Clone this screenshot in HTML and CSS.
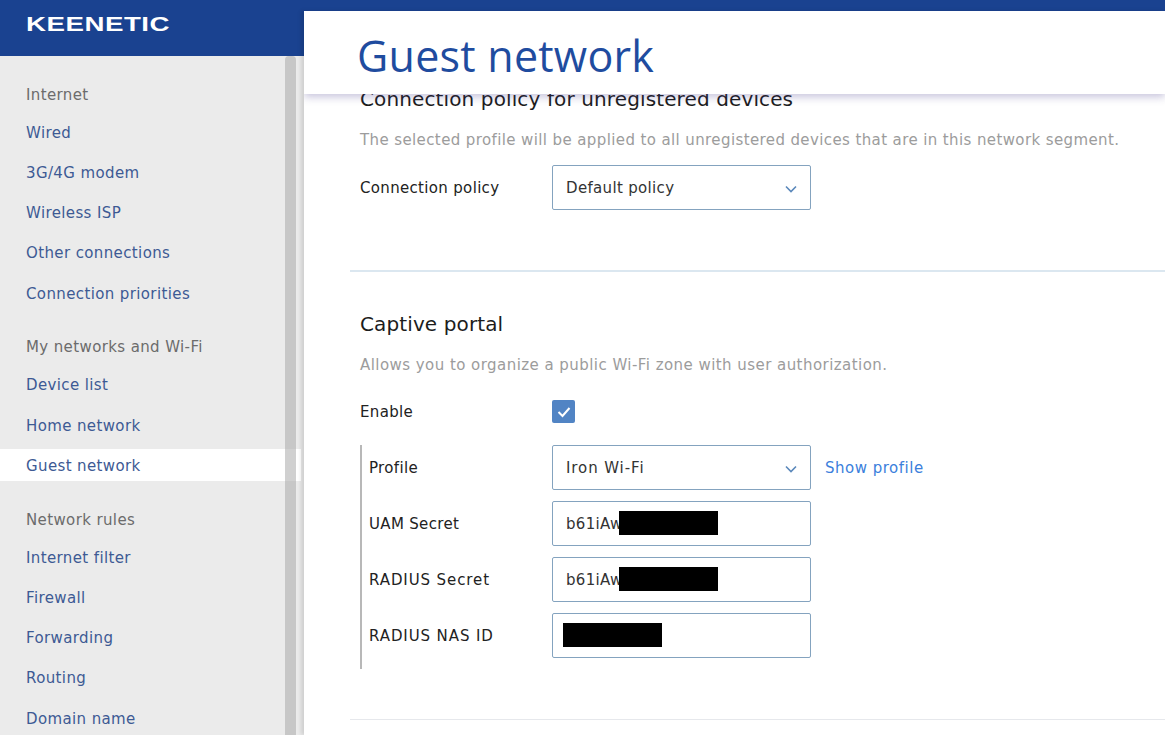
FILE: index.html
```html
<!DOCTYPE html>
<html lang="en">
<head>
<meta charset="utf-8">
<title>Guest network</title>
<link rel="stylesheet" href="styles.css">
</head>
<body>
<aside class="sidebar">
  <div class="brand">
    <svg class="logo" width="145" height="20" viewBox="0 0 145 20"><text x="0" y="17" textLength="144" lengthAdjust="spacingAndGlyphs">KEENETIC</text></svg>
  </div>
  <nav class="nav">
    <div class="group">Internet</div>
    <a class="item">Wired</a>
    <a class="item">3G/4G modem</a>
    <a class="item">Wireless ISP</a>
    <a class="item">Other connections</a>
    <a class="item">Connection priorities</a>
    <div class="group">My networks and Wi-Fi</div>
    <a class="item">Device list</a>
    <a class="item">Home network</a>
    <a class="item active">Guest network</a>
    <div class="group">Network rules</div>
    <a class="item">Internet filter</a>
    <a class="item">Firewall</a>
    <a class="item">Forwarding</a>
    <a class="item">Routing</a>
    <a class="item">Domain name</a>
  </nav>
  <div class="thumb"></div>
</aside>
<main class="main">
  <header class="title-bar"><h1>Guest network</h1></header>
  <div class="content">
    <section class="section first">
      <h2>Connection policy for unregistered devices</h2>
      <p class="desc">The selected profile will be applied to all unregistered devices that are in this network segment.</p>
      <div class="row">
        <span class="label">Connection policy</span>
        <div class="field select">Default policy
          <svg class="chev" width="12" height="8" viewBox="0 0 12 8"><path d="M1 1.5l5 5 5-5" fill="none" stroke="#5b88bb" stroke-width="1.6"/></svg>
        </div>
      </div>
    </section>
    <section class="section second">
      <h2>Captive portal</h2>
      <p class="desc">Allows you to organize a public Wi-Fi zone with user authorization.</p>
      <div class="enable">
        <span class="label">Enable</span>
        <span class="check"><svg width="14" height="12" viewBox="0 0 14 12"><path d="M1.5 6l4 4 7-8" fill="none" stroke="#fff" stroke-width="2"/></svg></span>
      </div>
      <div class="nested">
        <div class="row">
          <span class="label">Profile</span>
          <div class="field select wide">Iron Wi-Fi
            <svg class="chev" width="12" height="8" viewBox="0 0 12 8"><path d="M1 1.5l5 5 5-5" fill="none" stroke="#5b88bb" stroke-width="1.6"/></svg>
          </div>
          <a class="link">Show profile</a>
        </div>
        <div class="row">
          <span class="label">UAM Secret</span>
          <div class="field">b61iAw<span class="redact secret"></span></div>
        </div>
        <div class="row">
          <span class="label wide">RADIUS Secret</span>
          <div class="field">b61iAw<span class="redact secret"></span></div>
        </div>
        <div class="row">
          <span class="label wide">RADIUS NAS ID</span>
          <div class="field"><span class="redact nas"></span></div>
        </div>
      </div>
    </section>
  </div>
</main>
</body>
</html>
```
FILE: styles.css
```css
* { box-sizing: border-box; }
html, body { height: 100%; margin: 0; }
body {
  display: flex;
  height: 735px;
  overflow: hidden;
  background: #1a4290;
  font-family: "DejaVu Sans", sans-serif;
  font-size: 15px;
  letter-spacing: .33px;
  color: #222;
}
.sidebar {
  position: relative;
  flex: 0 0 304px;
  background: #ebebeb;
  overflow: hidden;
  letter-spacing: .38px;
}
.brand {
  height: 56px;
  background: #1a4290;
  padding: 14px 0 0 26px;
}
.logo { display: block; }
.logo text {
  font-family: "Liberation Sans", sans-serif;
  font-weight: 700;
  font-size: 20px;
  fill: #fff;
}
.nav { padding-top: 21.8px; }
.group {
  height: 32px;
  line-height: 34px;
  padding-left: 26px;
  color: #6c6c6c;
  margin: 0 0 6px;
}
.item ~ .group { margin-top: 21.8px; }
.item {
  display: block;
  height: 32px;
  line-height: 34px;
  margin-bottom: 8.22px;
  padding-left: 26px;
  color: #3d5a94;
  width: 301px;
}
.item.active { background: #fff; }
.thumb {
  position: absolute;
  left: 285px;
  top: 56px;
  bottom: 0;
  width: 11px;
  background: rgba(170,170,170,.55);
  border-radius: 4px 4px 0 0;
}
.main {
  flex: 1;
  display: flex;
  flex-direction: column;
  margin-top: 11px;
  background: #fff;
  overflow: hidden;
  box-shadow: -3px 0 4px rgba(0,0,0,.12);
  position: relative;
}
.title-bar {
  position: relative;
  z-index: 2;
  flex: 0 0 83px;
  background: #fff;
  box-shadow: 0 3px 8px rgba(70,60,140,.3);
  padding-left: 53px;
}
h1 {
  margin: 0;
  padding-top: 23px;
  font-family: "Open Sans", sans-serif;
  font-weight: 400;
  font-size: 43px;
  line-height: 1;
  letter-spacing: .25px;
  color: #1f4c9f;
}
.content {
  margin-top: -7px;
  padding-left: 46px;
}
.section { border-bottom: 2px solid #dbe7f0; padding-left: 10px; }
.section.first { height: 185px; }
.section.second { height: 448px; border-bottom: 1px solid #e6e8ec; padding-top: 40px; }
h2 {
  margin: 0;
  font-size: 20px;
  font-weight: 400;
  line-height: 24px;
  letter-spacing: .12px;
  color: #1c1c1c;
}
.desc {
  margin: 17px 0 13px;
  line-height: 24px;
  letter-spacing: .39px;
  color: #9c9c9c;
}
.second .desc { letter-spacing: .45px; }
.row {
  display: flex;
  align-items: center;
  height: 45px;
  margin-bottom: 11px;
}
.label { flex: 0 0 192px; }
.nested .label { flex-basis: 183px; }
.field {
  position: relative;
  flex: 0 0 259px;
  height: 45px;
  line-height: 44px;
  padding-left: 13px;
  border: 1px solid #84a3bf;
  border-radius: 2px;
  color: #333;
}
.wide { letter-spacing: .9px; }
.chev { position: absolute; right: 13px; top: 19px; }
.link { margin-left: 14px; color: #3b80dc; letter-spacing: .5px; }
.enable {
  display: flex;
  align-items: center;
  height: 23px;
  margin: 23px 0 22px;
}
.check {
  display: flex;
  align-items: center;
  justify-content: center;
  width: 23px;
  height: 23px;
  background: #5184c4;
  border-radius: 2px;
}
.nested {
  border-left: 2px solid #b8b8b8;
  padding-left: 7px;
  height: 224px;
}
.redact { position: absolute; background: #000; height: 24px; width: 99px; top: 9px; }
.redact.secret { left: 66px; }
.redact.nas { left: 10px; }
```
